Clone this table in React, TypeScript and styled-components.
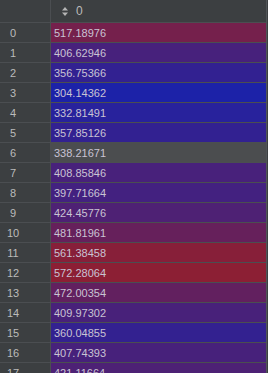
import styled, { createGlobalStyle } from "styled-components";

const values = [
  517.18976, 406.62946, 356.75366, 304.14362, 332.81491, 357.85126, 338.21671,
  408.85846, 397.71664, 424.45776, 481.81961, 561.38458, 572.28064, 472.00354,
  409.97302, 360.04855, 407.74393, 421.11664,
];

const selectedRow = 6;

const low = [28, 34, 168];
const high = [140, 31, 52];

const min = Math.min(...values);
const max = Math.max(...values);

const heat = (v: number) => {
  const t = (v - min) / (max - min);
  const c = low.map((l, i) => Math.round(l + (high[i] - l) * t));
  return `rgb(${c[0]}, ${c[1]}, ${c[2]})`;
};

const GlobalStyle = createGlobalStyle`
  html, body {
    margin: 0;
    padding: 0;
    background: #3c3f41;
  }
`;

const Table = styled.div`
  width: 266px;
  height: 373px;
  overflow: hidden;
  border-right: 1px solid #515558;
  font-family: "Liberation Sans", Arial, sans-serif;
  font-size: 11px;
  color: #bbbbbb;
`;

const Row = styled.div<{ $head?: boolean }>`
  display: grid;
  grid-template-columns: 51px 1fr;
  height: ${(p) => (p.$head ? 23 : 20)}px;
  border-bottom: 1px solid #4b4e51;
  box-sizing: border-box;
`;

const IndexCell = styled.div`
  display: flex;
  align-items: center;
  padding-left: 6px;
  border-right: 1px solid #4b4e51;
  background: #3c3f41;
`;

const IndexLabel = styled.span`
  width: 14px;
  text-align: center;
`;

const HeadCell = styled.div`
  display: flex;
  align-items: center;
  gap: 8px;
  padding-left: 11px;
  background: #3c3f41;
  font-size: 12px;
`;

const ValueCell = styled.div<{ $bg: string }>`
  display: flex;
  align-items: center;
  padding-left: 3px;
  background: ${(p) => p.$bg};
  color: #c9c3d3;
`;

const SortIcon = () => (
  <svg width="6" height="9" viewBox="0 0 6 9">
    <path d="M0 3.5 L3 0 L6 3.5 Z" fill="#b5b5b5" />
    <path d="M0 5.5 L3 9 L6 5.5 Z" fill="#b5b5b5" />
  </svg>
);

export default function App() {
  return (
    <>
      <GlobalStyle />
      <Table>
        <Row $head>
          <IndexCell />
          <HeadCell>
            <SortIcon />
            <span>0</span>
          </HeadCell>
        </Row>
        {values.map((v, i) => (
          <Row key={i}>
            <IndexCell>
              <IndexLabel>{i}</IndexLabel>
            </IndexCell>
            <ValueCell $bg={i === selectedRow ? "#4b4d4f" : heat(v)}>
              {v.toFixed(5)}
            </ValueCell>
          </Row>
        ))}
      </Table>
    </>
  );
}
